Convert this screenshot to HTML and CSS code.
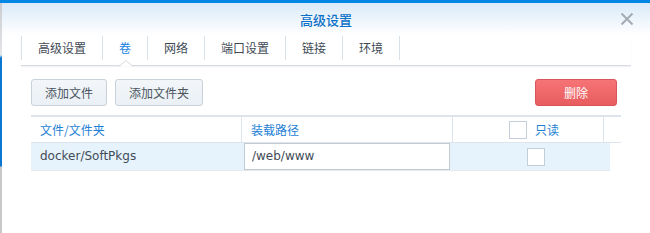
FILE: index.html
```html
<!DOCTYPE html>
<html>
<head>
<meta charset="utf-8">
<link rel="stylesheet" href="styles.css">
</head>
<body>
<div class="screen">
  <div class="desk"></div>
  <div class="window">
    <div class="topbar"></div>
    <div class="header">
      <div class="title">高级设置</div>
      <svg class="close" width="14" height="14" viewBox="0 0 14 14"><path d="M1.5 1.5 L12.5 12.5 M12.5 1.5 L1.5 12.5" stroke="#a3acb5" stroke-width="2" fill="none"/></svg>
    </div>
    <div class="body">
      <div class="tabs">
        <div class="tab">高级设置</div>
        <div class="tab active">卷
          <svg class="notch" width="14" height="7" viewBox="0 0 14 7"><path d="M0 6.5 L7 0.5 L14 6.5" stroke="#d3d9df" stroke-width="1" fill="#fff"/></svg>
        </div>
        <div class="tab">网络</div>
        <div class="tab">端口设置</div>
        <div class="tab">链接</div>
        <div class="tab last">环境</div>
      </div>
      <div class="content">
        <div class="toolbar">
          <div class="btn">添加文件</div>
          <div class="btn">添加文件夹</div>
          <div class="spacer"></div>
          <div class="btn danger">删除</div>
        </div>
        <div class="table">
          <div class="thead">
            <div class="th c1">文件/文件夹</div>
            <div class="th c2">装载路径</div>
            <div class="th c3"><span class="cb"></span><span>只读</span></div>
            <div class="th c4"></div>
          </div>
          <div class="trow">
            <div class="td c1">docker/SoftPkgs</div>
            <div class="td c2"><div class="input">/web/www</div></div>
            <div class="td c3r"><span class="cb big"></span></div>
          </div>
        </div>
      </div>
    </div>
  </div>
</div>
</body>
</html>
```

FILE: styles.css
```css
* { box-sizing: border-box; }
html, body { margin: 0; padding: 0; background: #fff; }
body {
  font-family: "DejaVu Sans", "Noto Sans CJK SC", sans-serif;
  font-size: 12px;
  color: #414b56;
  width: 650px;
  height: 233px;
  overflow: hidden;
}
.screen { display: flex; height: 233px; }
.desk {
  width: 2px;
  flex: none;
  background: linear-gradient(to bottom, #0086e5 0, #0086e5 3px, #c9ccd0 3px, #e4e6e8 55px, #0a78d0 58px, #0a78d0 166px, #c8c8c8 167px, #c8c8c8 100%);
}
.window { flex: 1; display: flex; flex-direction: column; }
.topbar { height: 3px; background: #0086e5; }
.header {
  height: 32px;
  background: linear-gradient(to bottom, #d9eaf8, #ffffff);
  display: flex;
  align-items: center;
  justify-content: center;
  position: relative;
}
.title {
  font-family: "Noto Sans CJK SC", sans-serif;
  font-size: 13px;
  font-weight: 500;
  color: #0b70c6;
}
.close { position: absolute; right: 16px; top: 9px; }
.body { padding: 0 19px 0 19px; }
.tabs {
  display: flex;
  height: 31px;
  border-bottom: 1px solid #d6dce2;
  box-shadow: 0 1px 1px rgba(0,0,0,0.05);
  padding-top: 1px;
}
.tab {
  font-family: "Noto Sans CJK SC", sans-serif;
  font-size: 12px;
  height: 24px;
  line-height: 24px;
  padding: 0 16px 0 16px;
  border-left: 1px solid #d8e0e8;
  color: #414b56;
  position: relative;
}
.tab.last { border-right: 1px solid #d8e0e8; }
.tab.active { color: #1580e0; }
.notch { position: absolute; left: 16px; top: 24px; }
.content { padding: 13px 10px 0 10px; }
.toolbar { display: flex; gap: 8px; height: 27px; }
.spacer { flex: 1; }
.btn {
  font-family: "Noto Sans CJK SC", sans-serif;
  height: 27px;
  line-height: 25px;
  padding: 0 13px;
  border: 1px solid #c9d1d9;
  border-radius: 3px;
  background: linear-gradient(to bottom, #f3f6f9, #eaf0f5);
  color: #4a5560;
}
.btn.danger {
  width: 82px;
  text-align: center;
  margin-right: 4px;
  border-color: #d8535a;
  background: linear-gradient(to bottom, #f67476, #e85c5e);
  color: #fff;
}
.table { margin-top: 9px; width: 590px; }
.thead {
  display: flex;
  height: 28px;
  border-top: 2px solid #dde4ec;
  border-bottom: 1px solid #dde4ec;
}
.th {
  font-family: "Noto Sans CJK SC", sans-serif;
  color: #1f7fd6;
  line-height: 25px;
  padding-left: 9px;
  border-right: 1px solid #dde4ec;
}
.c1 { width: 211px; }
.c2 { width: 211px; }
.c3 { width: 151px; display: flex; align-items: center; padding-left: 56px; gap: 8px; }
.c4 { flex: 1; border-right: none; }
.cb {
  display: inline-block;
  width: 18px;
  height: 18px;
  border: 1px solid #c5ced8;
  background: #fff;
}
.trow {
  display: flex;
  width: 579px;
  height: 28px;
  background: #e6f3fd;
  border-bottom: 1px solid #e4e9ee;
}
.td { line-height: 27px; }
.td.c1 { padding-left: 9px; color: #414b56; }
.td.c2 { padding: 0 3px 0 2px; }
.input {
  height: 27px;
  line-height: 25px;
  border: 1px solid #c3cad1;
  background: #fff;
  padding-left: 7px;
  color: #414b56;
}
.c3r { flex: 1; display: flex; align-items: center; padding-left: 74px; }
```
